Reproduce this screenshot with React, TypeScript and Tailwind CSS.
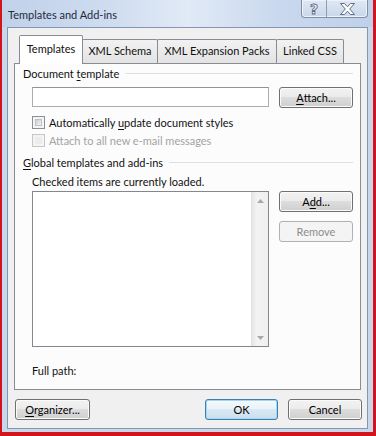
import React from 'react';

// ----------------------------------------------------
// SMALL PARTS
// ----------------------------------------------------

const U = ({ children }: { children: React.ReactNode }) => (
  <span className="underline underline-offset-[2px] decoration-1">{children}</span>
);

type BtnProps = {
  children: React.ReactNode;
  width: string;
  variant?: 'normal' | 'default' | 'disabled';
};

const Btn = ({ children, width, variant = 'normal' }: BtnProps) => {
  const look =
    variant === 'default'
      ? 'border-[#3c7fb1] bg-[linear-gradient(#f4f9fc_0%,#e9f3f9_50%,#d9e8f2_50%,#cadfed_100%)] shadow-[inset_0_0_0_1px_#a6d6f0] text-black'
      : variant === 'disabled'
      ? 'border-[#adb2b5] bg-[#f4f4f4] text-[#8d8d8d]'
      : 'border-[#707070] bg-[linear-gradient(#f2f2f2_0%,#ebebeb_50%,#dddddd_50%,#cfcfcf_100%)] shadow-[inset_0_0_0_1px_#fbfbfb] text-black';
  return (
    <div className={`${width} h-[21px] shrink-0 rounded-[3px] border flex items-center justify-center ${look}`}>
      {children}
    </div>
  );
};

const Check = ({ disabled }: { disabled?: boolean }) => (
  <div
    className={`w-[13px] h-[13px] shrink-0 border p-[2px] ${
      disabled ? 'border-[#c6c6c6] bg-[#f4f4f4]' : 'border-[#8e8f8f] bg-[#f4f4f4]'
    }`}
  >
    <div
      className={`w-full h-full ${
        disabled
          ? 'bg-[#ececec]'
          : 'bg-[linear-gradient(135deg,#cbcfd5,#f2f3f4)] border border-[#bfc3c8]'
      }`}
    />
  </div>
);

const GroupHeader = ({ children }: { children: React.ReactNode }) => (
  <div className="h-[18px] flex items-center">
    <span>{children}</span>
    <div className="flex-1 h-px bg-[#dde1e5] ml-[6px]" />
  </div>
);

const Arrow = ({ up }: { up?: boolean }) => (
  <div className="h-[17px] flex items-center justify-center">
    <svg width="7" height="4" viewBox="0 0 7 4">
      {up ? (
        <polygon points="0,4 7,4 3.5,0" fill="#a8a8a8" />
      ) : (
        <polygon points="0,0 7,0 3.5,4" fill="#a8a8a8" />
      )}
    </svg>
  </div>
);

// ----------------------------------------------------
// DIALOG
// ----------------------------------------------------

const tabs = [
  { label: 'XML Schema', w: 'w-[76px]' },
  { label: 'XML Expansion Packs', w: 'w-[120px]' },
  { label: 'Linked CSS', w: 'w-[68px]' },
];

export default function App() {
  return (
    <div className="w-[376px] h-[436px] border-l-[2px] border-r-[3px] border-b-[4px] border-[#d3141c] bg-[#c9d7ea] flex flex-col font-['Lato',sans-serif] text-[11px] text-[#111] leading-none select-none">
      {/* title bar */}
      <div className="h-[27px] shrink-0 flex items-start justify-between bg-[linear-gradient(90deg,#c0d1ea_0%,#d0ddf0_30%,#e1eaf6_50%,#c9d8ee_75%,#bfd0e8_100%)]">
        <span className="pl-[6px] pt-[9px] text-[11px] text-[#1e2a3a]">Templates and Add-ins</span>
        <div className="mr-[5px] h-[18px] flex border border-t-0 border-[#7d8ea8] rounded-b-[4px] bg-[linear-gradient(#dfe8f4,#c9d7ea)] shadow-[inset_0_0_0_1px_#eef3fa]">
          <div className="w-[25px] flex items-center justify-center border-r border-[#8c9db6]">
            <svg width="12" height="14" viewBox="0 0 12 14">
              <text x="6" y="12" textAnchor="middle" fontSize="14" fontWeight="bold" fontFamily="DejaVu Sans, sans-serif" fill="#ffffff" stroke="#5d6d86" strokeWidth="0.9">
                ?
              </text>
            </svg>
          </div>
          <div className="w-[40px] flex items-center justify-center">
            <svg width="15" height="12" viewBox="0 0 15 12">
              <polygon
                points="0.5,0.5 4.5,0.5 7.5,3.8 10.5,0.5 14.5,0.5 9.7,6 14.5,11.5 10.5,11.5 7.5,8.2 4.5,11.5 0.5,11.5 5.3,6"
                fill="#ffffff"
                stroke="#5d6d86"
                strokeWidth="1"
              />
            </svg>
          </div>
        </div>
      </div>

      {/* body frame */}
      <div className="flex-1 px-[5px] pb-[3px] flex">
        <div className="flex-1 border border-[#8497b0] bg-[#f0f0f0] px-[6px] pt-[7px] flex flex-col">
          {/* tab strip */}
          <div className="h-[28px] flex items-end pl-[5px] relative z-10">
            <div className="w-[64px] h-[29px] -mb-px bg-white border border-b-0 border-[#898c95] rounded-t-[2px] flex items-center justify-center pb-[4px]">
              Templates
            </div>
            {tabs.map((t) => (
              <div
                key={t.label}
                className={`${t.w} h-[24px] -ml-px bg-[linear-gradient(#f2f2f2,#e3e3e3)] border border-b-0 border-[#898c95] rounded-t-[2px] flex items-center justify-center pb-[2px]`}
              >
                {t.label}
              </div>
            ))}
          </div>

          {/* tab page */}
          <div className="h-[327px] border border-[#898c95] bg-[#fcfcfc] pl-[8px] pr-[7px] flex flex-col">
            <GroupHeader>
              Document <U>t</U>emplate
            </GroupHeader>
            <div className="mt-[5px] pl-[9px] flex items-start">
              <div className="w-[237px] h-[20px] border border-[#abadb3] border-t-[#8f9399] bg-white" />
              <div className="ml-auto">
                <Btn width="w-[74px]">
                  <U>A</U>ttach...
                </Btn>
              </div>
            </div>
            <div className="mt-[6px] pl-[9px] h-[16px] flex items-center gap-[4px]">
              <Check />
              <span>
                Automatically <U>u</U>pdate document styles
              </span>
            </div>
            <div className="mt-[2px] pl-[9px] h-[16px] flex items-center gap-[4px] text-[#a3a3a3]">
              <Check disabled />
              <span>Attach to all new e-mail messages</span>
            </div>

            <div className="mt-[5px]">
              <GroupHeader>
                <U>G</U>lobal templates and add-ins
              </GroupHeader>
            </div>
            <div className="mt-[2px] pl-[9px] h-[16px] flex items-center">Checked items are currently loaded.</div>

            <div className="mt-[2px] pl-[9px] flex items-start">
              <div className="w-[237px] h-[156px] border border-[#828790] bg-white flex justify-end">
                <div className="w-[17px] h-full bg-[linear-gradient(90deg,#e6e6e6,#f3f3f3_30%,#f0f0f0)] border-l border-[#e3e3e3] flex flex-col justify-between">
                  <Arrow up />
                  <Arrow />
                </div>
              </div>
              <div className="ml-auto flex flex-col gap-[9px]">
                <Btn width="w-[74px]">
                  A<U>d</U>d...
                </Btn>
                <Btn width="w-[74px]" variant="disabled">
                  Remove
                </Btn>
              </div>
            </div>

            <div className="mt-[15px] pl-[9px] h-[16px] flex items-center">Full path:</div>
          </div>

          {/* bottom buttons */}
          <div className="mt-[9px] flex items-start">
            <div className="ml-[1px]">
              <Btn width="w-[75px]">
                <U>O</U>rganizer...
              </Btn>
            </div>
            <div className="ml-auto flex gap-[10px] mr-[-1px]">
              <Btn width="w-[73px]" variant="default">
                OK
              </Btn>
              <Btn width="w-[74px]">Cancel</Btn>
            </div>
          </div>
        </div>
      </div>
    </div>
  );
}
